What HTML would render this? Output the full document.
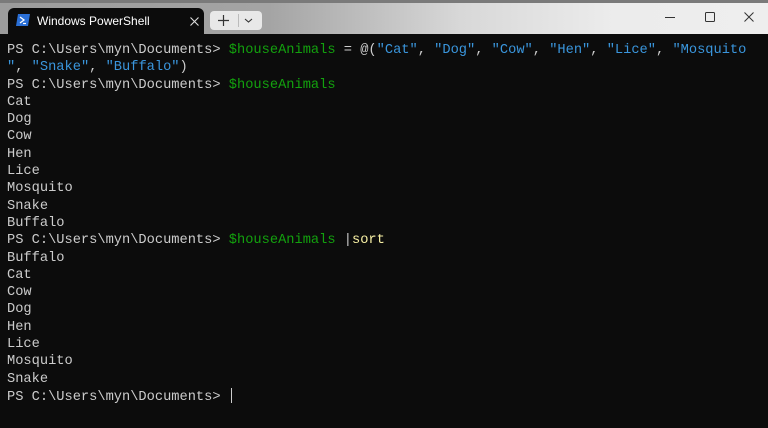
<!DOCTYPE html>
<html><head><style>
body{margin:0;width:768px;height:428px;overflow:hidden;background:#0c0c0c;position:relative;font-family:"Liberation Sans",sans-serif}
#bar{position:absolute;left:0;top:0;width:768px;height:34px;background:linear-gradient(90deg,#9c9c9c 0%,#a4a4a4 35%,#d8d8d8 60%,#ececec 80%,#eeeeee 100%)}
#top{position:absolute;left:0;top:0;width:768px;height:3px;background:#7a7a7a}
#tab{position:absolute;left:8px;top:8px;width:196px;height:26px;background:#0c0c0c;border-radius:6px 6px 0 0}
#tab .t{position:absolute;left:29px;top:6px;color:#fff;font-size:12px}
#btn{position:absolute;left:210px;top:11px;width:52px;height:19px;background:#e8e8e8;border-radius:4px}
#btn .s{position:absolute;left:28px;top:3px;width:1px;height:13px;background:#bbb}
pre{position:absolute;left:7px;top:42px;margin:0;font-family:"Liberation Mono",monospace;font-size:13.7px;line-height:17.3px;color:#cccccc}
.g{color:#13a10e}.b{color:#3a96dd}.y{color:#f9f1a5}
</style></head><body>
<div id="bar"></div><div id="top"></div>
<div id="tab">
<svg style="position:absolute;left:8px;top:6px" width="14" height="12"><path d="M2 0H14L12 12H0Z" fill="#2a6fd6"/><path d="M4 3L8 6L4 9" stroke="#fff" stroke-width="1.3" fill="none"/><path d="M7 9.5H10" stroke="#fff" stroke-width="1.2"/></svg>
<span class="t">Windows PowerShell</span>
<svg style="position:absolute;left:182px;top:9px" width="9" height="9"><path d="M0.5 0.5L8.5 8.5M8.5 0.5L0.5 8.5" stroke="#ddd" stroke-width="1.1"/></svg></div>
<div id="btn"><svg style="position:absolute;left:7px;top:3px" width="13" height="13"><path d="M6.5 1V12M1 6.5H12" stroke="#333" stroke-width="1.2"/></svg><div class="s"></div><svg style="position:absolute;left:34px;top:7px" width="9" height="6"><path d="M1 1L4.5 4L8 1" stroke="#333" stroke-width="1.1" fill="none"/></svg></div>
<svg style="position:absolute;left:665px;top:17px" width="11" height="2"><path d="M0 0.5H10" stroke="#333"/></svg>
<svg style="position:absolute;left:705px;top:12px" width="11" height="11"><rect x="0.5" y="0.5" width="9" height="9" fill="none" stroke="#333" rx="1"/></svg>
<svg style="position:absolute;left:744px;top:12px" width="11" height="11"><path d="M0.5 0.5L9.5 9.5M9.5 0.5L0.5 9.5" stroke="#333"/></svg>
<pre>PS C:\Users\myn\Documents&gt; <span class="g">$houseAnimals</span> = @(<span class="b">"Cat"</span>, <span class="b">"Dog"</span>, <span class="b">"Cow"</span>, <span class="b">"Hen"</span>, <span class="b">"Lice"</span>, <span class="b">"Mosquito</span>
<span class="b">"</span>, <span class="b">"Snake"</span>, <span class="b">"Buffalo"</span>)
PS C:\Users\myn\Documents&gt; <span class="g">$houseAnimals</span>
Cat
Dog
Cow
Hen
Lice
Mosquito
Snake
Buffalo
PS C:\Users\myn\Documents&gt; <span class="g">$houseAnimals</span> |<span class="y">sort</span>
Buffalo
Cat
Cow
Dog
Hen
Lice
Mosquito
Snake
PS C:\Users\myn\Documents&gt; <span style="display:inline-block;width:1px;height:15px;background:#ccc;vertical-align:-3px;margin-left:2px"></span></pre>
</body></html>
